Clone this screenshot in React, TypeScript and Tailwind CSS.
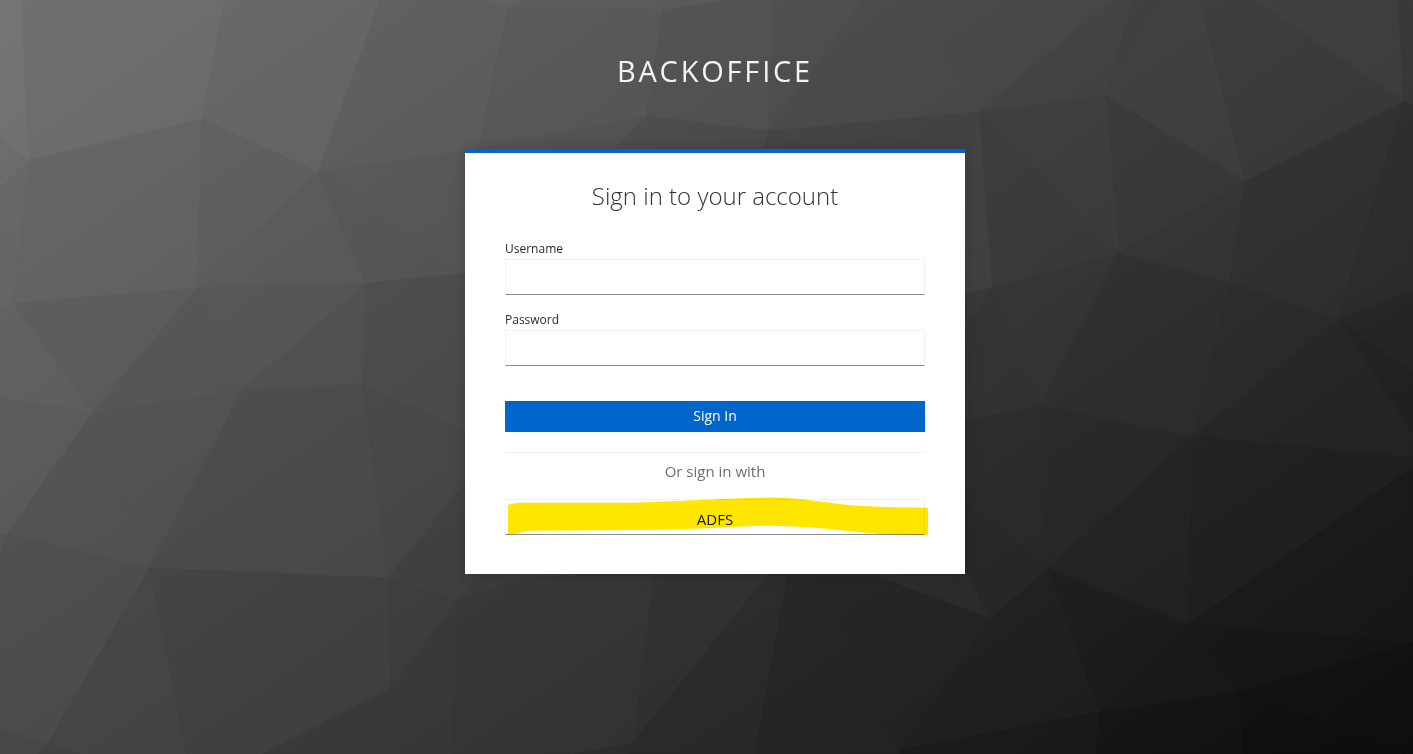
import React from "react";

const facets: [string, string][] = [
  ["0,0 21,0 29,160 0,138", "#757575"],
  ["21,0 224,0 202,119 29,160", "#6e6e6e"],
  ["224,0 380,0 318,172 202,119", "#686868"],
  ["380,0 485,0 508,8 478,149 318,172", "#5e5e5e"],
  ["0,138 29,160 0,188", "#6e6e6e"],
  ["0,188 29,160 13,303 0,314", "#676767"],
  ["29,160 202,119 197,288 13,303", "#646464"],
  ["202,119 318,172 197,288", "#5f5f5f"],
  ["318,172 366,283 197,288", "#5b5b5b"],
  ["318,172 465,273 366,283", "#565656"],
  ["318,172 478,149 470,273 465,273", "#585858"],
  ["0,314 13,303 93,412 0,398", "#626262"],
  ["13,303 197,288 93,412", "#5c5c5c"],
  ["197,288 241,391 93,412", "#555555"],
  ["197,288 366,283 241,391", "#565656"],
  ["366,283 362,384 241,391", "#505050"],
  ["366,283 470,273 470,433 362,384", "#4b4b4b"],
  ["362,384 470,433 470,477 388,578", "#474747"],
  ["241,391 362,384 388,578 149,568", "#4b4b4b"],
  ["93,412 241,391 149,568", "#525252"],
  ["0,398 93,412 7,534 0,535", "#5d5d5d"],
  ["93,412 149,568 7,534", "#535353"],
  ["0,535 7,534 0,553", "#555555"],
  ["7,534 149,568 48,743 0,730 0,553", "#4e4e4e"],
  ["149,568 186,754 80,754 48,743", "#454545"],
  ["149,568 388,578 391,688 262,754 186,754", "#414141"],
  ["388,578 458,600 391,688", "#3d3d3d"],
  ["388,578 470,477 458,600", "#404040"],
  ["0,730 48,743 39,754 0,754", "#484848"],
  ["48,743 80,754 39,754", "#404040"],
  ["391,688 350,754 262,754", "#393939"],
  ["391,688 458,600 453,754 350,754", "#383838"],
  ["470,477 480,570 458,600", "#3e3e3e"],
  ["458,600 480,570 555,570", "#3a3a3a"],
  ["458,600 555,570 655,570 633,743 573,754 453,754", "#353535"],
  ["633,743 630,754 573,754", "#2c2c2c"],
  ["655,570 772,570 633,743", "#313131"],
  ["772,570 789,570 755,754 630,754 633,743", "#292929"],
  ["789,570 812,570 900,754 755,754", "#232323"],
  ["812,570 860,570 991,618 900,754", "#222222"],
  ["860,570 965,570 991,618", "#2d2d2d"],
  ["991,618 1048,568 1100,712 900,750", "#1f1f1f"],
  ["900,750 1100,712 1096,754 900,754", "#181818"],
  ["1048,568 1188,624 1100,712", "#1b1b1b"],
  ["1100,712 1188,624 1239,692", "#181818"],
  ["1188,624 1413,643 1239,692", "#161616"],
  ["1100,712 1239,692 1244,754 1096,754", "#131313"],
  ["1239,692 1407,754 1244,754", "#0e0e0e"],
  ["1239,692 1413,643 1413,754 1407,754", "#101010"],
  ["1188,624 1413,467 1413,643", "#191919"],
  ["1193,436 1413,457 1413,467 1188,624", "#202020"],
  ["1048,568 1193,436 1188,624", "#232323"],
  ["1040,405 1193,436 1048,568", "#282828"],
  ["960,422 1040,405 1048,568 960,498", "#2a2a2a"],
  ["960,498 1048,568 991,618 965,570", "#272727"],
  ["992,287 1040,405 960,422 960,335", "#323232"],
  ["992,287 1119,253 1040,405", "#343434"],
  ["1119,253 1230,282 1193,436 1040,405", "#2e2e2e"],
  ["1230,282 1338,319 1193,436", "#2b2b2b"],
  ["1338,319 1413,433 1413,457 1193,436", "#262626"],
  ["1338,319 1413,373 1413,433", "#202020"],
  ["1338,319 1413,290 1413,373", "#252525"],
  ["1245,181 1404,101 1338,319", "#313131"],
  ["1404,101 1413,104 1413,290 1338,319", "#2d2d2d"],
  ["1245,181 1338,319 1230,282", "#313131"],
  ["1119,253 1245,181 1230,282", "#353535"],
  ["1106,95 1245,181 1119,253", "#393939"],
  ["979,112 1106,95 1119,253", "#3d3d3d"],
  ["979,112 1119,253 992,287", "#3a3a3a"],
  ["979,112 992,287 960,295 960,114", "#434343"],
  ["992,287 960,335 960,295", "#383838"],
  ["905,0 1112,0 979,112", "#484848"],
  ["979,112 1112,0 1133,0 1106,95", "#434343"],
  ["1106,95 1133,0 1162,0", "#3f3f3f"],
  ["1106,95 1162,0 1200,0 1245,181", "#414141"],
  ["1200,0 1255,0 1404,101 1245,181", "#3c3c3c"],
  ["1255,0 1398,0 1404,101", "#424242"],
  ["1398,0 1413,0 1413,104 1404,101", "#3a3a3a"],
  ["485,0 518,0 508,8", "#636363"],
  ["518,0 730,0 663,10 508,8", "#5c5c5c"],
  ["508,8 663,10 646,116 478,149", "#585858"],
  ["663,10 730,0 773,0 768,131 646,116", "#525252"],
  ["773,0 863,0 768,131", "#4e4e4e"],
  ["863,0 905,0 979,112 768,131", "#4a4a4a"],
  ["646,116 768,131 762,155 653,155", "#494949"],
  ["646,116 653,155 607,155", "#4a4a4a"],
  ["646,116 607,155 478,155 478,149", "#535353"],
  ["768,131 979,112 970,155 762,155", "#414141"],
];

function Field({ label }: { label: string }) {
  return (
    <div className="flex flex-col">
      <label className="h-[19px] text-[12px] leading-[18px] text-[#2a2a2a]">{label}</label>
      <div className="h-[36px] border border-[#f0f0f0] border-b-[#8a8d90] bg-white" />
    </div>
  );
}

export default function App() {
  return (
    <div
      className="relative h-[754px] w-full overflow-hidden bg-[#333333]"
      style={{ fontFamily: '"Open Sans", "Noto Sans", sans-serif' }}
    >
      <svg
        className="absolute left-[-4px] top-[-4px] h-[762px] w-[1421px] blur-[0.6px]"
        viewBox="-4 -4 1421 762"
      >
        <defs>
          <linearGradient id="mesh" gradientUnits="userSpaceOnUse" x1="0" y1="0" x2="814" y2="1163">
            <stop offset="0" stopColor="#757575" />
            <stop offset="1" stopColor="#0d0d0d" />
          </linearGradient>
        </defs>
        <rect x="-4" y="-4" width="1421" height="762" fill="url(#mesh)" />
        <g opacity="0.62">
          {facets.map(([points, fill], i) => (
            <polygon key={i} points={points} fill={fill} stroke={fill} strokeWidth="0.5" />
          ))}
        </g>
      </svg>

      <div className="relative flex w-[965px] flex-col items-stretch pl-[465px]">
        <h1 className="mt-[49px] flex h-[44px] items-center justify-center text-[29px] font-normal tracking-[2.8px] text-[#f4f4f4]">
          BACKOFFICE
        </h1>

        <main className="mt-[56px] flex h-[425px] flex-col border-t-4 border-[#0066cc] bg-white px-10 shadow-[0_0_12px_rgba(0,0,0,0.18)]">
          <h2 className="mt-[25px] h-[36px] text-center text-[24px] font-light leading-[36px] text-[#333333]">
            Sign in to your account
          </h2>

          <div className="mt-[26px] flex flex-col gap-[16px]">
            <Field label="Username" />
            <Field label="Password" />
          </div>

          <button className="mt-[35px] h-[31px] bg-[#0066cc] pb-[2px] text-center text-[14px] leading-[29px] text-white">
            Sign In
          </button>

          <div className="mt-5 border-t border-[#f0f0f0] pt-[8px] text-center text-[15px] leading-[21px] text-[#6a6e73]">
            Or sign in with
          </div>

          <div className="relative mt-[17px] h-[36px] border border-[#f0f0f0] border-b-[#8a8d90] bg-white pt-[9px] text-center text-[15px] leading-[21px] text-[#151515]">
            ADFS
            <svg
              className="absolute left-[-6px] top-[-10px] h-[55px] w-[435px] mix-blend-multiply"
              viewBox="500 490 435 55"
            >
              <path
                d="M508 505 C512 503 517 503 522 502.7 L632 502.7 C670 502 700 499.5 765 497.5 C790 497 800 499 848 505 C880 507 900 507.5 928 507.7 L928 535 L885 534.3 C860 533 820 526 765 525.7 C740 526 690 530 632 530 L532 530.7 C522 531 518 534 512 534.3 L508 534.3 Z"
                fill="#ffe600"
              />
            </svg>
          </div>
        </main>
      </div>
    </div>
  );
}
